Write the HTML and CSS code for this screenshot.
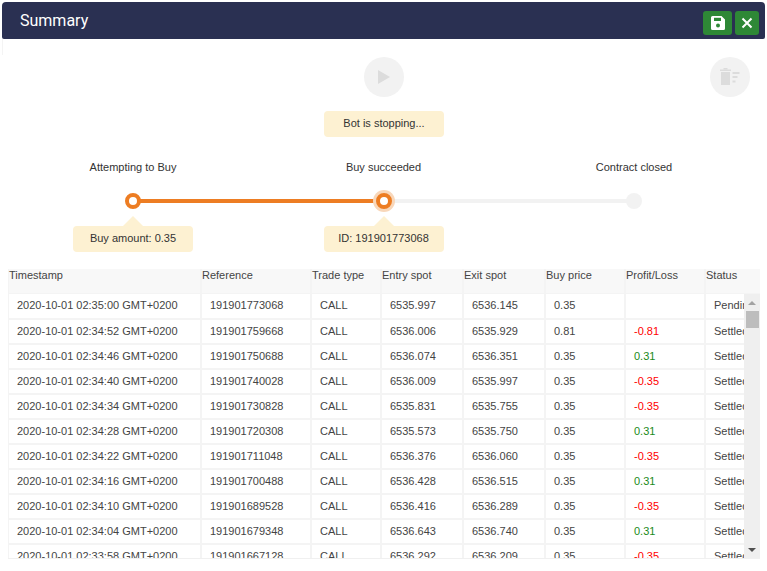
FILE: index.html
```html
<!DOCTYPE html>
<html lang="en">
<head>
<meta charset="utf-8">
<title>Summary</title>
<link rel="stylesheet" href="styles.css">
</head>
<body>
<header class="titlebar">
  <h1 class="title">Summary</h1>
  <div class="actions">
    <button class="btn btn-save" aria-label="Save">
      <svg width="14" height="14" viewBox="0 0 14 14"><path fill="#fff" d="M1.500 0h9L14 3.500v9A1.500 1.500 0 0 1 12.500 14h-11A1.500 1.500 0 0 1 0 12.500v-11A1.500 1.500 0 0 1 1.500 0z"/><rect x="3" y="1.800" width="7" height="3.200" fill="#2e8836"/><circle cx="7" cy="9.500" r="2" fill="#2e8836"/></svg>
    </button>
    <button class="btn btn-close" aria-label="Close">
      <svg width="12" height="12" viewBox="0 0 12 12"><path stroke="#fff" stroke-width="2" d="M1.500 1.500l9 9M10.500 1.500l-9 9"/></svg>
    </button>
  </div>
</header>
<main class="panel">
  <div class="toolbar">
    <div class="tool-spacer"></div>
    <div class="round-btn">
      <svg width="12" height="14" viewBox="0 0 12 14"><path fill="#dcdcdc" d="M0 0l12 7-12 7z"/></svg>
    </div>
    <div class="tool-right">
      <div class="round-btn">
        <svg width="20" height="18" viewBox="0 0 20 18"><g fill="#dcdcdc"><rect x="0" y="1.500" width="11" height="1.500"/><rect x="3.500" y="0" width="4" height="1.500"/><rect x="1" y="4" width="9" height="13"/><rect x="12.500" y="4" width="7" height="2"/><rect x="12.500" y="8" width="5" height="2"/><rect x="12.500" y="12.500" width="3" height="2"/></g></svg>
      </div>
    </div>
  </div>
  <div class="status-row">
    <div class="tip">Bot is stopping...</div>
  </div>
  <div class="steps">
    <div class="step">
      <div class="step-label">Attempting to Buy</div>
      <div class="dot dot-done"></div>
      <div class="tip tip-arrow">Buy amount: 0.35</div>
    </div>
    <div class="step">
      <div class="step-label">Buy succeeded</div>
      <div class="dot dot-active"></div>
      <div class="tip tip-arrow">ID: 191901773068</div>
    </div>
    <div class="step">
      <div class="step-label">Contract closed</div>
      <div class="dot dot-idle"></div>
    </div>
  </div>
  <div class="table-wrap">
    <table class="log">
      <colgroup>
        <col class="c1"><col class="c2"><col class="c3"><col class="c4"><col class="c5"><col class="c6"><col class="c7"><col class="c8">
      </colgroup>
      <thead>
        <tr><th>Timestamp</th><th>Reference</th><th>Trade type</th><th>Entry spot</th><th>Exit spot</th><th>Buy price</th><th>Profit/Loss</th><th>Status</th></tr>
      </thead>
      <tbody>
        <tr><td>2020-10-01 02:35:00 GMT+0200</td><td>191901773068</td><td>CALL</td><td>6535.997</td><td>6536.145</td><td>0.35</td><td></td><td>Pending</td></tr>
        <tr><td>2020-10-01 02:34:52 GMT+0200</td><td>191901759668</td><td>CALL</td><td>6536.006</td><td>6535.929</td><td>0.81</td><td class="loss">-0.81</td><td>Settled</td></tr>
        <tr><td>2020-10-01 02:34:46 GMT+0200</td><td>191901750688</td><td>CALL</td><td>6536.074</td><td>6536.351</td><td>0.35</td><td class="win">0.31</td><td>Settled</td></tr>
        <tr><td>2020-10-01 02:34:40 GMT+0200</td><td>191901740028</td><td>CALL</td><td>6536.009</td><td>6535.997</td><td>0.35</td><td class="loss">-0.35</td><td>Settled</td></tr>
        <tr><td>2020-10-01 02:34:34 GMT+0200</td><td>191901730828</td><td>CALL</td><td>6535.831</td><td>6535.755</td><td>0.35</td><td class="loss">-0.35</td><td>Settled</td></tr>
        <tr><td>2020-10-01 02:34:28 GMT+0200</td><td>191901720308</td><td>CALL</td><td>6535.573</td><td>6535.750</td><td>0.35</td><td class="win">0.31</td><td>Settled</td></tr>
        <tr><td>2020-10-01 02:34:22 GMT+0200</td><td>191901711048</td><td>CALL</td><td>6536.376</td><td>6536.060</td><td>0.35</td><td class="loss">-0.35</td><td>Settled</td></tr>
        <tr><td>2020-10-01 02:34:16 GMT+0200</td><td>191901700488</td><td>CALL</td><td>6536.428</td><td>6536.515</td><td>0.35</td><td class="win">0.31</td><td>Settled</td></tr>
        <tr><td>2020-10-01 02:34:10 GMT+0200</td><td>191901689528</td><td>CALL</td><td>6536.416</td><td>6536.289</td><td>0.35</td><td class="loss">-0.35</td><td>Settled</td></tr>
        <tr><td>2020-10-01 02:34:04 GMT+0200</td><td>191901679348</td><td>CALL</td><td>6536.643</td><td>6536.740</td><td>0.35</td><td class="win">0.31</td><td>Settled</td></tr>
        <tr><td>2020-10-01 02:33:58 GMT+0200</td><td>191901667128</td><td>CALL</td><td>6536.292</td><td>6536.209</td><td>0.35</td><td class="loss">-0.35</td><td>Settled</td></tr>
      </tbody>
    </table>
    <div class="scrollbar">
      <span class="arrow-up"></span>
      <span class="thumb"></span>
      <span class="arrow-down"></span>
    </div>
  </div>
</main>
</body>
</html>
```
FILE: styles.css
```css
* { box-sizing: border-box; }
html, body { margin: 0; height: 100%; background: #fff; overflow: hidden; }
body { padding: 2px 2px 0; font-family: "Liberation Sans", Arial, sans-serif; font-size: 11px; color: #333; }

.titlebar {
  height: 37px; display: flex; justify-content: space-between; align-items: flex-start;
  background: #2a3052; border-radius: 4px 4px 2px 2px; padding: 9px 6px 0 18px;
}
.title { margin: 0; font: 400 16px/19px Roboto, sans-serif; color: #fff; }
.actions { display: flex; gap: 3px; }
.btn { border: 0; padding: 0; height: 24px; background: #2e8836; border-radius: 3px; display: flex; align-items: center; justify-content: center; }
.btn-save { width: 29px; }
.btn-close { width: 24px; }

.panel {
  padding: 0 5px 0 6px;
  background: linear-gradient(#f4f4f4, #f4f4f4) 0 0 / 1px 16px no-repeat;
}
.toolbar { display: grid; grid-template-columns: 1fr 40px 1fr; padding-top: 18px; }
.round-btn { width: 40px; height: 40px; border-radius: 50%; background: #f2f2f2; display: flex; align-items: center; justify-content: center; }
.tool-right { display: flex; justify-content: flex-end; padding-right: 10px; }

.status-row { display: flex; justify-content: center; margin-top: 14px; }
.tip {
  position: relative; width: 120px; height: 26px; background: #fdf1d2; border-radius: 4px;
  text-align: center; font: 11px/25px "Liberation Sans", sans-serif; color: #333;
}
.tip-arrow::before {
  content: ""; position: absolute; left: 50%; top: -10px; margin-left: -10px;
  border: 10px solid transparent; border-top: 0; border-bottom-color: #fdf1d2;
}

.steps {
  display: grid; grid-template-columns: repeat(3, 250.500px); justify-content: center; height: 108px; margin: 24px 0 0 -1px;
  background: linear-gradient(#ed7d23, #ed7d23) 125px 38px / 251px 4px no-repeat,
              linear-gradient(#f2f2f2, #f2f2f2) 376px 38px / 251px 4px no-repeat;
}
.step { display: flex; flex-direction: column; align-items: center; }
.step-label { height: 14px; font: 11px/12px "Liberation Sans", sans-serif; color: #333; }
.dot { width: 16px; height: 16px; border-radius: 50%; margin-top: 18px; margin-bottom: 17px; }
.dot-done { background: #fff; border: 4px solid #ed7d23; }
.dot-active { background: #fff; border: 4px solid #ed7d23; box-shadow: 0 0 0 3px #f8d7ba; }
.dot-idle { background: #f2f2f2; }

.table-wrap { position: relative; width: 752px; height: 290px; overflow: hidden; border-bottom: 1px solid #f0f0f0; }
.log { border-collapse: separate; border-spacing: 0; table-layout: fixed; width: 754px; color: #444; font: 11px "Liberation Sans", sans-serif; }
.c1 { width: 194px; } .c2 { width: 110px; } .c3 { width: 70px; } .c4 { width: 82px; }
.c5 { width: 82px; } .c6 { width: 80px; } .c7 { width: 80px; } .c8 { width: 56px; }
.log th {
  height: 25px; padding: 0; vertical-align: top; text-align: left; font-weight: 400; line-height: 13px;
  background: #f8f8f8; border-right: 2px solid #f4f4f4; border-bottom: 1px solid #f4f4f4;
}
.log td {
  height: 25px; padding: 0 0 1px 8px; white-space: nowrap; overflow: hidden;
  border-bottom: 2px solid #f4f4f4; border-right: 2px solid #f4f4f4;
}
.log tbody tr:first-child td { height: 26px; padding-bottom: 2px; }
.log th:first-child { border-left: 1px solid #f4f4f4; }
.log td:first-child { border-left: 1px solid #f4f4f4; }
.log .loss { color: #f00; }
.log .win { color: #1a8a1a; }

.scrollbar {
  position: absolute; right: 0; top: 25px; bottom: 0; width: 16px; background: #efefef;
  display: flex; flex-direction: column; align-items: center;
}
.arrow-up { margin-top: 7px; border: 4px solid transparent; border-top: 0; border-bottom: 4px solid #a3a3a3; }
.thumb { width: 13px; height: 17px; margin-top: 6px; background: #bdbdbd; }
.arrow-down { margin-top: auto; margin-bottom: 6px; border: 4px solid transparent; border-bottom: 0; border-top: 4px solid #505050; }
```
